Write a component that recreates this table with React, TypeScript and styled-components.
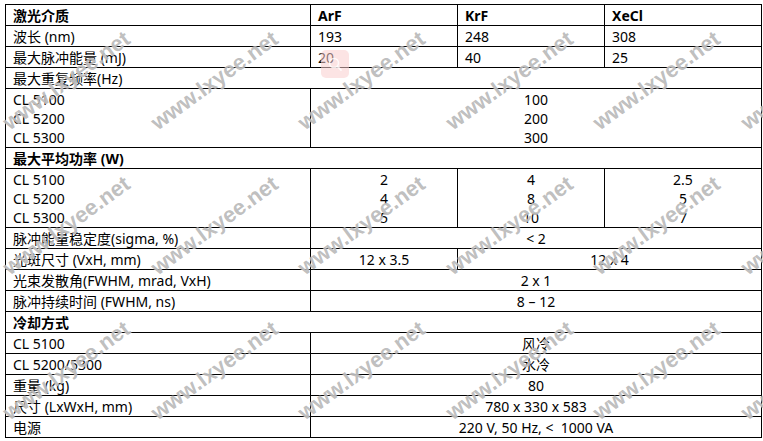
import React from 'react';
import styled, { createGlobalStyle } from 'styled-components';

const GlobalStyle = createGlobalStyle`
  html, body {
    margin: 0;
    padding: 0;
    background: #ffffff;
  }
  body {
    font-family: "Noto Sans", "Noto Sans CJK SC", sans-serif;
    color: #000000;
  }
`;

const Page = styled.div`
  position: relative;
  width: 763px;
  height: 441px;
  overflow: hidden;
  padding: 4px 0 0 5px;
  box-sizing: border-box;
`;

const SpecTable = styled.table`
  border-collapse: collapse;
  table-layout: fixed;
  width: 756px;
  font-size: 14px;
  line-height: 19px;
`;

const Cell = styled.td<{ $align?: 'left' | 'center'; $bold?: boolean }>`
  border: 1px solid #000000;
  padding: 1px 7px 0;
  text-align: ${(p) => p.$align || 'left'};
  font-weight: ${(p) => (p.$bold ? 700 : 400)};
  vertical-align: top;
  white-space: nowrap;
  overflow: hidden;
`;

const Lines = styled.div`
  display: flex;
  flex-direction: column;
`;

const Overlay = styled.div`
  position: absolute;
  top: -11px;
  left: 12px;
  display: grid;
  grid-template-columns: repeat(6, 147.5px);
  grid-auto-rows: 145px;
  pointer-events: none;
`;

const MarkCell = styled.div`
  position: relative;
`;

const Mark = styled.span`
  position: absolute;
  left: 0;
  bottom: 0;
  transform-origin: 0 100%;
  transform: rotate(-36deg);
  font-family: "Liberation Sans", Arial, sans-serif;
  font-size: 22px;
  font-weight: 700;
  line-height: 1;
  white-space: nowrap;
  color: rgba(150, 150, 150, 0.62);
  text-shadow: 0 0 1px rgba(255, 255, 255, 0.9);
`;

const Badge = styled.div`
  position: absolute;
  left: 321px;
  top: 50px;
  width: 28px;
  height: 28px;
  border-radius: 5px;
  background: rgba(250, 205, 205, 0.55);
  display: flex;
  align-items: center;
  justify-content: center;
`;

const multi = (items: string[]) => (
  <Lines>
    {items.map((t) => (
      <span key={t}>{t}</span>
    ))}
  </Lines>
);

const App: React.FC = () => {
  const marks = Array.from({ length: 18 }, (_, i) => i);
  return (
    <>
      <GlobalStyle />
      <Page>
        <SpecTable>
          <colgroup>
            <col style={{ width: 305 }} />
            <col style={{ width: 147 }} />
            <col style={{ width: 147 }} />
            <col style={{ width: 157 }} />
          </colgroup>
          <tbody>
            <tr>
              <Cell $bold>激光介质</Cell>
              <Cell $bold>ArF</Cell>
              <Cell $bold>KrF</Cell>
              <Cell $bold>XeCl</Cell>
            </tr>
            <tr>
              <Cell>波长 (nm)</Cell>
              <Cell>193</Cell>
              <Cell>248</Cell>
              <Cell>308</Cell>
            </tr>
            <tr>
              <Cell>最大脉冲能量 (mJ)</Cell>
              <Cell>20</Cell>
              <Cell>40</Cell>
              <Cell>25</Cell>
            </tr>
            <tr>
              <Cell colSpan={4}>最大重复频率(Hz)</Cell>
            </tr>
            <tr>
              <Cell>{multi(['CL 5100', 'CL 5200', 'CL 5300'])}</Cell>
              <Cell colSpan={3} $align="center">
                {multi(['100', '200', '300'])}
              </Cell>
            </tr>
            <tr>
              <Cell colSpan={4} $bold>
                最大平均功率 (W)
              </Cell>
            </tr>
            <tr>
              <Cell>{multi(['CL 5100', 'CL 5200', 'CL 5300'])}</Cell>
              <Cell $align="center">{multi(['2', '4', '5'])}</Cell>
              <Cell $align="center">{multi(['4', '8', '10'])}</Cell>
              <Cell $align="center">{multi(['2.5', '5', '7'])}</Cell>
            </tr>
            <tr>
              <Cell>脉冲能量稳定度(sigma, %)</Cell>
              <Cell colSpan={3} $align="center">
                &lt; 2
              </Cell>
            </tr>
            <tr>
              <Cell>光斑尺寸 (VxH, mm)</Cell>
              <Cell $align="center">12 x 3.5</Cell>
              <Cell colSpan={2} $align="center">
                12 x 4
              </Cell>
            </tr>
            <tr>
              <Cell>光束发散角(FWHM, mrad, VxH)</Cell>
              <Cell colSpan={3} $align="center">
                2 x 1
              </Cell>
            </tr>
            <tr>
              <Cell>脉冲持续时间 (FWHM, ns)</Cell>
              <Cell colSpan={3} $align="center">
                8 – 12
              </Cell>
            </tr>
            <tr>
              <Cell colSpan={4} $bold>
                冷却方式
              </Cell>
            </tr>
            <tr>
              <Cell>CL 5100</Cell>
              <Cell colSpan={3} $align="center">
                风冷
              </Cell>
            </tr>
            <tr>
              <Cell>CL 5200/5300</Cell>
              <Cell colSpan={3} $align="center">
                水冷
              </Cell>
            </tr>
            <tr>
              <Cell>重量 (kg)</Cell>
              <Cell colSpan={3} $align="center">
                80
              </Cell>
            </tr>
            <tr>
              <Cell>尺寸 (LxWxH, mm)</Cell>
              <Cell colSpan={3} $align="center">
                780 x 330 x 583
              </Cell>
            </tr>
            <tr>
              <Cell>电源</Cell>
              <Cell colSpan={3} $align="center">
                220 V, 50 Hz, &lt;&nbsp; 1000 VA
              </Cell>
            </tr>
          </tbody>
        </SpecTable>

        <Badge>
          <svg width="16" height="16" viewBox="0 0 16 16" fill="none">
            <circle cx="7" cy="7" r="4.5" stroke="#ffffff" strokeWidth="1.6" opacity="0.8" />
            <path d="M10.3 10.3 L14 14" stroke="#ffffff" strokeWidth="1.8" strokeLinecap="round" opacity="0.8" />
          </svg>
        </Badge>

        <Overlay>
          {marks.map((i) => (
            <MarkCell key={i}>
              <Mark>www.lxyee.net</Mark>
            </MarkCell>
          ))}
        </Overlay>
      </Page>
    </>
  );
};

export default App;
